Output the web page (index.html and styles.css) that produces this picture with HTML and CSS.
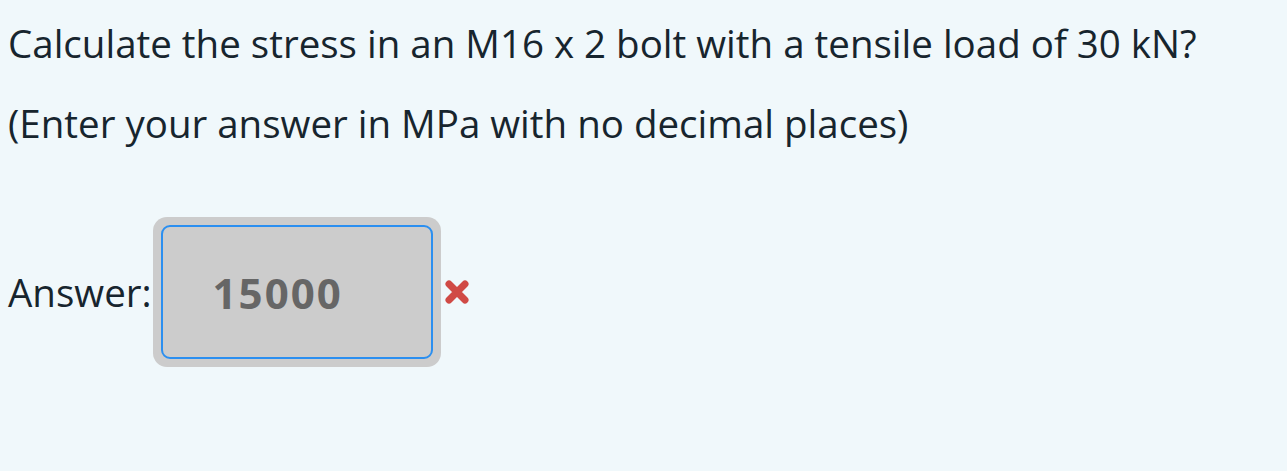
FILE: index.html
```html
<!DOCTYPE html>
<html>
<head>
<meta charset="utf-8">
<link rel="stylesheet" href="styles.css">
</head>
<body>
<div class="question">
  <p class="qtext">Calculate the stress in an M16 x 2 bolt with a tensile load of 30 kN?</p>
  <p class="qtext">(Enter your answer in MPa with no decimal places)</p>
  <div class="answer-row">
    <label class="answer-label">Answer:</label>
    <div class="answer-box">
      <div class="answer-input">15000</div>
    </div>
    <svg class="wrong-icon" width="28" height="28" viewBox="0 0 28 28" aria-hidden="true">
      <path d="M6 6 L22 22 M22 6 L6 22" stroke="#d04a45" stroke-width="7" stroke-linecap="round"/>
    </svg>
  </div>
</div>
</body>
</html>
```

FILE: styles.css
```css
html, body {
  margin: 0;
  padding: 0;
  background: #f0f8fb;
}
body {
  padding: 0 8px;
  font-family: "Open Sans", "Noto Sans", sans-serif;
  color: #17252e;
  height: 471px;
}
.question {
  padding-top: 19px;
}
.qtext {
  margin: 0 0 32px 0;
  font-size: 38.5px;
  line-height: 48px;
}
.answer-row {
  display: flex;
  align-items: center;
  margin-top: 70px;
}
.answer-label {
  font-size: 38.5px;
  line-height: 48px;
  margin-right: 1px;
}
.answer-box {
  background: #cccccc;
  border-radius: 14px;
  padding: 8px;
}
.answer-input {
  width: 272px;
  height: 134px;
  box-sizing: border-box;
  border: 2px solid #2b8ff0;
  border-radius: 9px;
  background: #cccccc;
  color: #666666;
  font-weight: 700;
  font-size: 42px;
  letter-spacing: 2px;
  display: flex;
  align-items: center;
  padding-left: 50px;
}
.wrong-icon {
  margin-left: 2px;
}
```
